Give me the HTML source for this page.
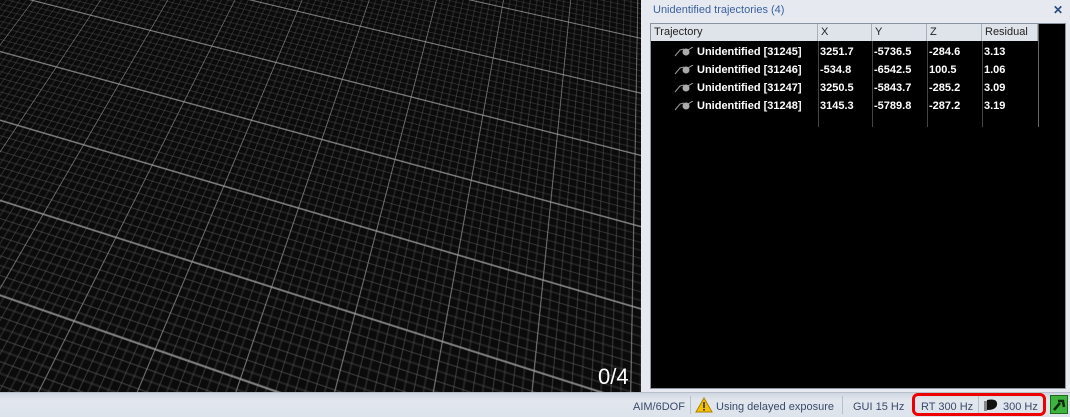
<!DOCTYPE html>
<html style="overflow:hidden"><head><meta charset="utf-8"><style>
*{margin:0;padding:0;box-sizing:border-box}
body{width:1070px;height:417px;overflow:hidden;background:#e6eaf0;font-family:"Liberation Sans",sans-serif;position:relative}
#vp{position:absolute;left:0;top:0;width:641px;height:392px;background:#0b0b0b;overflow:hidden;perspective:700px;perspective-origin:320px 0px}
#plane{position:absolute;left:-900px;top:-900px;width:2600px;height:2600px;
background-image:
linear-gradient(90deg,rgba(160,160,160,.7) 1.5px,transparent 1.5px),
linear-gradient(0deg,rgba(160,160,160,.7) 1.5px,transparent 1.5px),
linear-gradient(90deg,rgba(100,100,100,.55) 1px,transparent 1px),
linear-gradient(0deg,rgba(100,100,100,.55) 1px,transparent 1px);
background-size:95px 95px,95px 95px,9.5px 9.5px,9.5px 9.5px;
transform:rotateX(40deg) rotateZ(17deg);transform-origin:50% 50%}
#cnt{position:absolute;left:598px;top:364px;color:#fff;font-size:22px}
#panel{position:absolute;left:645px;top:0;width:425px;height:392px;background:#e6eaf0}
#title{position:absolute;left:8px;top:4px;color:#3a5fa0;font-size:11px}
#x{position:absolute;right:7px;top:3px;color:#2a4a80;font-size:12px;font-weight:bold}
#tbl{position:absolute;left:5px;top:23px;width:416px;height:366px;background:#000;border:1px solid #8a94a0}
.h{position:absolute;top:0;height:17px;background:#dfe4ea;color:#222;font-size:11px;line-height:17px;padding-left:3px;border-right:1px solid #a8b0ba}
.r{position:absolute;left:0;height:18px;color:#fff;font-size:11px;font-weight:bold;line-height:18px;width:387px}
.r span{position:absolute;top:0;padding-left:2px;font-weight:bold}
.r b{position:absolute;left:22px;top:0;font-weight:bold}
.ic{position:absolute;left:-1px;top:4px}
#status{position:absolute;left:0;top:392px;width:1070px;height:25px;background:linear-gradient(#cfd6e0,#e2e7ee 30%,#dde3eb);border-top:1px solid #b8c0cc;font-size:11px;color:#3a4a6a;overflow:hidden}
#status div{position:absolute;top:8px}
#red{position:absolute;left:912px;top:393px;width:134px;height:23px;border:3px solid #e00;border-radius:6px}
</style></head><body>
<div id="vp"><div id="plane"></div><div id="cnt">0/4</div></div>
<div id="panel">
<div id="title">Unidentified trajectories (4)</div><div id="x">✕</div>
<div id="tbl">
<div class="h" style="left:0;width:167px">Trajectory</div>
<div class="h" style="left:167px;width:54px">X</div>
<div class="h" style="left:221px;width:55px">Y</div>
<div class="h" style="left:276px;width:55px">Z</div>
<div class="h" style="left:331px;width:56px">Residual</div>
<div class="r" style="top:19px;left:24px"><svg class="ic" width="20" height="10"><path d="M1 9 L6 3 L10 2" stroke="#999" fill="none"/><circle cx="12" cy="5" r="3.5" fill="#aaa"/><path d="M14 3 L19 0" stroke="#aaa"/></svg><b>Unidentified [31245]</b></div>
<div class="r" style="top:37px;left:24px"><svg class="ic" width="20" height="10"><path d="M1 9 L6 3 L10 2" stroke="#999" fill="none"/><circle cx="12" cy="5" r="3.5" fill="#aaa"/><path d="M14 3 L19 0" stroke="#aaa"/></svg><b>Unidentified [31246]</b></div>
<div class="r" style="top:55px;left:24px"><svg class="ic" width="20" height="10"><path d="M1 9 L6 3 L10 2" stroke="#999" fill="none"/><circle cx="12" cy="5" r="3.5" fill="#aaa"/><path d="M14 3 L19 0" stroke="#aaa"/></svg><b>Unidentified [31247]</b></div>
<div class="r" style="top:73px;left:24px"><svg class="ic" width="20" height="10"><path d="M1 9 L6 3 L10 2" stroke="#999" fill="none"/><circle cx="12" cy="5" r="3.5" fill="#aaa"/><path d="M14 3 L19 0" stroke="#aaa"/></svg><b>Unidentified [31248]</b></div>
<div class="r" style="top:19px"><span style="left:167px">3251.7</span><span style="left:221px">-5736.5</span><span style="left:276px">-284.6</span><span style="left:331px">3.13</span></div>
<div class="r" style="top:37px"><span style="left:167px">-534.8</span><span style="left:221px">-6542.5</span><span style="left:276px">100.5</span><span style="left:331px">1.06</span></div>
<div class="r" style="top:55px"><span style="left:167px">3250.5</span><span style="left:221px">-5843.7</span><span style="left:276px">-285.2</span><span style="left:331px">3.09</span></div>
<div class="r" style="top:73px"><span style="left:167px">3145.3</span><span style="left:221px">-5789.8</span><span style="left:276px">-287.2</span><span style="left:331px">3.19</span></div>
<div style="position:absolute;left:167px;top:17px;width:1px;height:86px;background:#444"></div>
<div style="position:absolute;left:221px;top:17px;width:1px;height:86px;background:#444"></div>
<div style="position:absolute;left:276px;top:17px;width:1px;height:86px;background:#444"></div>
<div style="position:absolute;left:331px;top:17px;width:1px;height:86px;background:#444"></div>
<div style="position:absolute;left:387px;top:0;width:1px;height:103px;background:#666"></div>
</div></div>
<div id="status">
<div style="left:633px">AIM/6DOF</div>
<div style="left:690px;top:3px;width:1px;height:18px;background:#b8c0cc"></div>
<svg style="position:absolute;left:695px;top:4px" width="18" height="16"><path d="M9 1 L17 15 L1 15 Z" fill="#f2c200" stroke="#b08000"/><rect x="8.2" y="5" width="1.6" height="6" fill="#333"/><rect x="8.2" y="12" width="1.6" height="1.6" fill="#333"/></svg>
<div style="left:716px">Using delayed exposure</div>
<div style="left:842px;top:3px;width:1px;height:18px;background:#b8c0cc"></div>
<div style="left:853px">GUI 15 Hz</div>
<div style="left:921px">RT 300 Hz</div>
<div style="left:978px;top:3px;width:1px;height:18px;background:#b8c0cc"></div>
<svg style="position:absolute;left:983px;top:5px" width="16" height="14"><rect x="1" y="3" width="3" height="10" fill="#888"/><path d="M4 2 Q15 0 14 7 Q13 12 4 12 Z" fill="#111"/></svg>
<div style="left:1003px">300 Hz</div>
<div style="left:1050px;top:2px;width:18px;height:19px;background:#3fb33f;border:1px solid #1a6a1a"></div>
<svg style="position:absolute;left:1052px;top:5px" width="14" height="14"><path d="M2 12 L8 5 M6 3 L11 3 L12 9" stroke="#0a2a0a" stroke-width="2.5" fill="none"/></svg>
</div>
<div id="red"></div>
</body></html>
